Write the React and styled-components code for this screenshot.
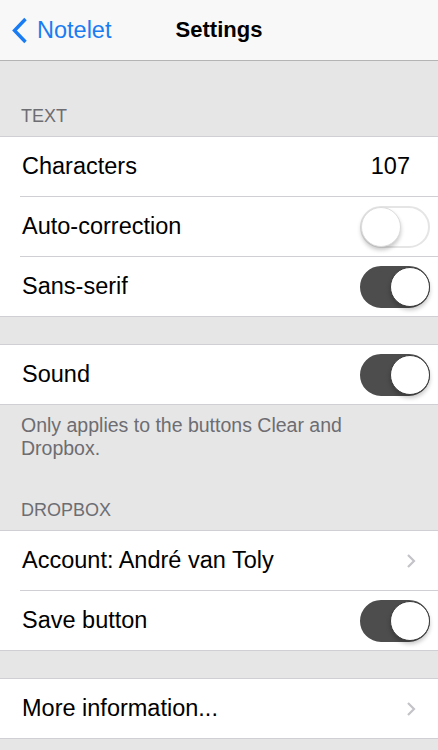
import React from 'react';
import styled, { createGlobalStyle } from 'styled-components';

const GlobalStyle = createGlobalStyle`
  html, body {
    margin: 0;
    padding: 0;
    background: #e6e6e6;
    font-family: "Liberation Sans", Arial, sans-serif;
  }
`;

const Page = styled.div`
  width: 438px;
  min-height: 750px;
  background: #e6e6e6;
`;

const NavBar = styled.div`
  position: relative;
  height: 60px;
  background: #f8f8f8;
  border-bottom: 1px solid #b4b4b4;
  display: flex;
  align-items: center;
  justify-content: center;
`;

const BackButton = styled.div`
  position: absolute;
  left: 12px;
  top: 0;
  height: 60px;
  display: flex;
  align-items: center;
  gap: 9px;
  color: #1a7cf2;
  font-size: 23.5px;
`;

const Title = styled.div`
  font-size: 22px;
  font-weight: bold;
  color: #000;
`;

const SectionHeader = styled.div`
  padding: ${p => p.$top}px 21px 8px;
  font-size: 18px;
  line-height: 23px;
  color: #6d6d72;
  text-transform: uppercase;
`;

const SectionFooter = styled.div`
  padding: 9px 40px 0 21px;
  font-size: 19.5px;
  line-height: 23px;
  color: #6d6d72;
`;

const Spacer = styled.div`
  height: 27px;
`;

const Group = styled.div`
  background: #fff;
  border-top: 1px solid #d0d0d4;
  border-bottom: 1px solid #d0d0d4;
`;

const Row = styled.div`
  position: relative;
  height: 59px;
  display: flex;
  align-items: center;
  padding: 0 8px 0 22px;
  & + & {
    border-top: 1px solid transparent;
  }
  & + &::before {
    content: '';
    position: absolute;
    left: 20px;
    right: 0;
    top: -1px;
    height: 1px;
    background: #d0d0d4;
  }
`;

const Label = styled.div`
  flex: 1;
  font-size: 23.5px;
  color: #000;
`;

const Value = styled.div`
  font-size: 23.5px;
  color: #000;
  margin-right: 20px;
`;

const SwitchTrack = styled.div`
  position: relative;
  box-sizing: border-box;
  width: 70px;
  height: 42px;
  border-radius: 21px;
  background: ${p => (p.$on ? '#4d4d4d' : '#fff')};
  border: 2px solid ${p => (p.$on ? '#4d4d4d' : '#e5e5e5')};
`;

const SwitchKnob = styled.div`
  position: absolute;
  top: -1px;
  left: ${p => (p.$on ? '28px' : '-1px')};
  box-sizing: border-box;
  width: 40px;
  height: 40px;
  border-radius: 50%;
  background: #fff;
  border: ${p => (p.$on ? '1px solid #3a3a3a' : '1px solid #dcdcdc')};
  box-shadow: 0 3px 4px rgba(0, 0, 0, 0.22);
`;

const Chevron = styled.svg`
  margin-right: 14px;
`;

function Switch({ on }) {
  return (
    <SwitchTrack $on={on}>
      <SwitchKnob $on={on} />
    </SwitchTrack>
  );
}

function Disclosure() {
  return (
    <Chevron width="10" height="16" viewBox="0 0 10 16">
      <polyline points="2,2 8,8 2,14" fill="none" stroke="#c4c4c8" strokeWidth="2.2" />
    </Chevron>
  );
}

export default function App() {
  return (
    <Page>
      <GlobalStyle />
      <NavBar>
        <BackButton>
          <svg width="16" height="27" viewBox="0 0 16 27">
            <polyline points="13.5,2 2.5,13.5 13.5,25" fill="none" stroke="#1a7cf2" strokeWidth="3.4" />
          </svg>
          Notelet
        </BackButton>
        <Title>Settings</Title>
      </NavBar>

      <SectionHeader $top={44}>Text</SectionHeader>
      <Group>
        <Row>
          <Label>Characters</Label>
          <Value>107</Value>
        </Row>
        <Row>
          <Label>Auto-correction</Label>
          <Switch on={false} />
        </Row>
        <Row>
          <Label>Sans-serif</Label>
          <Switch on />
        </Row>
      </Group>

      <Spacer />
      <Group>
        <Row>
          <Label>Sound</Label>
          <Switch on />
        </Row>
      </Group>
      <SectionFooter>Only applies to the buttons Clear and Dropbox.</SectionFooter>

      <SectionHeader $top={39}>Dropbox</SectionHeader>
      <Group>
        <Row>
          <Label>Account: André van Toly</Label>
          <Disclosure />
        </Row>
        <Row>
          <Label>Save button</Label>
          <Switch on />
        </Row>
      </Group>

      <Spacer />
      <Group>
        <Row>
          <Label>More information...</Label>
          <Disclosure />
        </Row>
      </Group>
    </Page>
  );
}
